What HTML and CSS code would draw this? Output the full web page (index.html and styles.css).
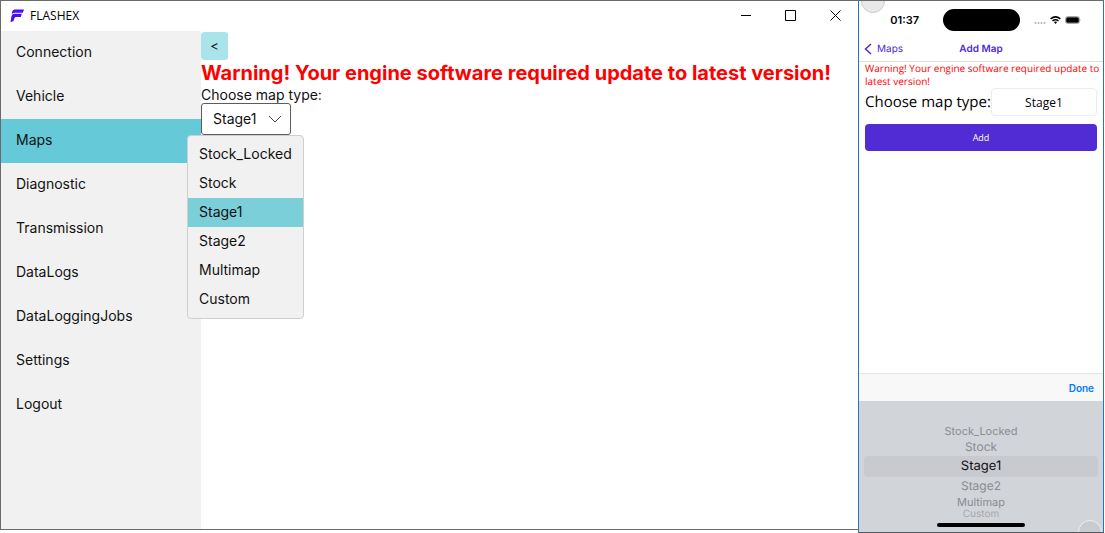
FILE: index.html
```html
<!DOCTYPE html>
<html lang="en">

<head>
	<meta charset="utf-8">
	<meta name="viewport" content="width=device-width, initial-scale=1">
	<title>FLASHEX</title>
	<link rel="stylesheet" href="styles.css">
</head>

<body>
	<!-- Desktop app -->
	<div class="window">
		<header class="titlebar">
			<svg class="logo" width="14" height="14" viewBox="0 0 14 14">
				<path d="M4.500 .5H14L12.800 3.800H5Q3.500 3.800 1.800 5Q2 .8 4.500 .5Z" fill="#4b0df5" />
				<path d="M4 4.800H11.800L10.800 8H6Q5 8.200 4.500 9L3.500 12L.5 13.300L1.500 7Q2 5 4 4.800Z" fill="#4b0df5" />
			</svg>
			<span class="app-name">FLASHEX</span>
			<button class="caption" aria-label="Minimize">
				<svg width="10" height="10" viewBox="0 0 10 10"><path d="M0 5.500H10" /></svg>
			</button>
			<button class="caption" aria-label="Maximize">
				<svg width="11" height="11" viewBox="0 0 11 11"><path d="M.5 .5H10.500V10.500H.5Z" /></svg>
			</button>
			<button class="caption" aria-label="Close">
				<svg width="11" height="11" viewBox="0 0 11 11"><path d="M.5 .5L10.500 10.500M10.500 .5L.5 10.500" /></svg>
			</button>
		</header>

		<div class="window-body">
			<nav class="sidebar">
				<a href="#">Connection</a>
				<a href="#">Vehicle</a>
				<a href="#" class="active">Maps</a>
				<a href="#">Diagnostic</a>
				<a href="#">Transmission</a>
				<a href="#">DataLogs</a>
				<a href="#">DataLoggingJobs</a>
				<a href="#">Settings</a>
				<a href="#">Logout</a>
			</nav>

			<main class="content">
				<button class="back" aria-label="Back">&lt;</button>
				<h1>Warning! Your engine software required update to latest version!</h1>
				<label for="map-type">Choose map type:</label>
				<div class="combo">
					<select id="map-type">
						<option>Stage1</option>
					</select>
					<svg class="chevron" width="14" height="8" viewBox="0 0 14 8"><path d="M1 1L7 7L13 1" /></svg>
					<ul class="menu" role="listbox" aria-label="Map type">
						<li role="option">Stock_Locked</li>
						<li role="option">Stock</li>
						<li role="option" class="selected" aria-selected="true">Stage1</li>
						<li role="option">Stage2</li>
						<li role="option">Multimap</li>
						<li role="option">Custom</li>
					</ul>
				</div>
			</main>
		</div>
	</div>

	<!-- Phone app -->
	<div class="phone">
		<div class="touch touch-top"></div>
		<div class="status">
			<span class="clock">01:37</span>
			<span class="island"></span>
			<span class="indicators">
				<svg width="12" height="10" viewBox="0 0 12 10" fill="#b5b5b5">
					<circle cx="1.500" cy="8" r="1" /><circle cx="4.500" cy="8" r="1" /><circle cx="7.500" cy="8" r="1" /><circle cx="10.500" cy="8" r="1" />
				</svg>
				<svg width="11" height="8" viewBox="0 0 11 8" fill="none" stroke="#000" stroke-width="1.500">
					<path d="M.6 2.900Q5.500 -1.200 10.400 2.900" /><path d="M2.500 5Q5.500 2.500 8.500 5" />
					<path d="M3.900 6L5.500 7.900L7.100 6Q5.500 4.800 3.900 6Z" fill="#000" stroke="none" />
				</svg>
				<svg width="17" height="8" viewBox="0 0 17 8">
					<rect x=".5" y=".5" width="14" height="7" rx="2" fill="none" stroke="#aaa" />
					<rect x="1.200" y="1.200" width="12.600" height="5.600" rx="1.500" />
					<path d="M15.500 2.800Q16.700 4 15.500 5.200Z" fill="#aaa" />
				</svg>
			</span>
		</div>
		<div class="navbar">
			<a href="#">
				<svg width="8" height="12" viewBox="0 0 8 12"><path d="M7 1L1.500 6L7 11" /></svg>
				Maps
			</a>
			<h2>Add Map</h2>
		</div>

		<div class="form">
			<p class="warning">Warning! Your engine software required update to latest version!</p>
			<div class="field">
				<label for="phone-map-type">Choose map type:</label>
				<input id="phone-map-type" type="text" value="Stage1" readonly>
			</div>
			<button class="add">Add</button>
		</div>

		<div class="toolbar">
			<button class="done">Done</button>
		</div>
		<div class="picker">
			<ul class="wheel" role="listbox" aria-label="Map type">
				<li role="option" class="far">Stock_Locked</li>
				<li role="option" class="near">Stock</li>
				<li role="option" class="current" aria-selected="true">Stage1</li>
				<li role="option" class="near">Stage2</li>
				<li role="option" class="far">Multimap</li>
				<li role="option" class="edge">Custom</li>
			</ul>
			<div class="home"></div>
			<div class="touch touch-bottom"></div>
		</div>
	</div>
</body>

</html>
```

FILE: styles.css
```css
* {
	box-sizing: border-box;
}

body {
	display: flex;
	min-height: 100vh;
	margin: 0;
	padding-right: 1px;
	background: #fff;
	color: #111;
	font-family: Inter, sans-serif;
	font-size: 14px;
}

button,
input,
select {
	margin: 0;
	padding: 0;
	border: 0;
	background: none;
	color: inherit;
	font: inherit;
}

ul {
	margin: 0;
	padding: 0;
	list-style: none;
}

a {
	color: inherit;
	text-decoration: none;
}

svg {
	display: block;
}

/* Desktop window */
.window {
	display: flex;
	flex: 1;
	flex-direction: column;
	margin-bottom: 3px;
	border: 1px solid #6b696b;
	border-right: 0;
}

.titlebar {
	display: flex;
	align-items: center;
	height: 30px;
	padding-left: 9px;
	color: #000;
}

.app-name {
	flex: 1;
	margin-left: 6px;
	font-family: "Open Sans", sans-serif;
	font-size: 12px;
	line-height: 30px;
}

.caption {
	display: grid;
	place-items: center;
	width: 45px;
	height: 28px;
	margin-bottom: 2px;
}

.caption path {
	fill: none;
	stroke: #000;
}

.window-body {
	display: flex;
	flex: 1;
}

.sidebar {
	width: 200px;
	background: #f1f1f1;
}

.sidebar a {
	display: block;
	height: 44px;
	padding-left: 15px;
	line-height: 42px;
}

.sidebar .active {
	background: #65c9d8;
}

.content {
	flex: 1;
}

.back {
	display: block;
	width: 28px;
	height: 30px;
	border: 1px solid #fff;
	border-left: 0;
	border-radius: 4px;
	background: #a9e4eb;
	font-size: 13px;
}

h1 {
	margin: 0;
	color: #f00;
	font-size: 20px;
	font-weight: 700;
	line-height: 25px;
}

.content label {
	display: block;
	line-height: 17px;
}

.combo {
	position: relative;
	width: 90px;
}

.combo select {
	display: block;
	width: 100%;
	height: 32px;
	padding: 0 0 1px 11px;
	border: 1px solid #5c5c5c;
	border-radius: 3px;
	appearance: none;
}

.chevron {
	position: absolute;
	top: 12px;
	right: 9px;
	pointer-events: none;
}

.chevron path {
	fill: none;
	stroke: #444;
}

.menu {
	position: absolute;
	top: 32px;
	left: -14px;
	width: 117px;
	padding: 4px 0;
	border: 1px solid #cfcfcf;
	border-radius: 4px;
	background: #f1f1f1;
}

.menu li {
	height: 29px;
	padding-left: 11px;
	line-height: 27px;
}

.menu .selected {
	background: #7bcfd9;
}

/* Phone */
.phone {
	position: relative;
	display: flex;
	flex-direction: column;
	width: 246px;
	border: 1px solid #2576b9;
	border-top-color: #6b696b;
	border-bottom-color: #555a60;
	overflow: hidden;
	text-rendering: geometricPrecision;
}

.status {
	display: grid;
	grid-template-columns: 1fr 77px 1fr;
	align-items: center;
	height: 38px;
}

.clock {
	padding-left: 8px;
	color: #000;
	font-size: 11px;
	font-weight: 600;
	text-align: center;
}

.island {
	height: 22px;
	border-radius: 11px;
	background: #000;
}

.indicators {
	display: flex;
	align-items: center;
	justify-content: center;
	gap: 4px;
	padding-right: 6px;
}

.navbar {
	display: grid;
	grid-template-columns: 1fr auto 1fr;
	align-items: center;
	height: 23px;
	padding: 0 5px 3px;
	border-bottom: 1px solid #dedede;
	color: #512bd4;
	font-size: 10px;
}

.navbar a {
	display: flex;
	align-items: center;
	gap: 5px;
}

.navbar path {
	fill: none;
	stroke: #512bd4;
	stroke-width: 1.5;
}

h2 {
	margin: 0;
	font-size: 10px;
	font-weight: 600;
}

.form {
	flex: 1;
	padding: 0 6px;
	font-family: "Open Sans", sans-serif;
}

.warning {
	margin: 0 -4px 0 0;
	color: #f00;
	font-size: 10px;
	line-height: 13px;
}

.field {
	display: flex;
	align-items: center;
	color: #000;
	font-size: 15px;
}

.field input {
	flex: 1;
	min-width: 0;
	height: 28px;
	border: 1px solid #ececec;
	border-radius: 4px;
	font-size: 12px;
	text-align: center;
}

.add {
	display: block;
	width: 100%;
	height: 27px;
	margin-top: 8px;
	border-radius: 4px;
	background: #512bd4;
	color: #fff;
	font-size: 9px;
}

.toolbar {
	display: flex;
	justify-content: flex-end;
	height: 28px;
	padding-right: 9px;
	border-top: 1px solid #e5e5e5;
	background: #f8f8f8;
}

.done {
	color: #007aff;
	font-size: 10px;
	font-weight: 600;
}

.picker {
	position: relative;
	height: 131px;
	padding: 23px 5px 0;
	background: #d1d4d9;
}

.wheel {
	color: #8a8c91;
	text-align: center;
}

.wheel .far {
	font-size: 11px;
	line-height: 14px;
}

.wheel .near {
	font-size: 12px;
	line-height: 18px;
}

.wheel .current {
	border-radius: 4px;
	background: #c9cacf;
	color: #111;
	font-size: 13px;
	line-height: 21px;
}

.wheel .edge {
	color: #a5a7ac;
	font-size: 10px;
	line-height: 10px;
}

.home {
	width: 88px;
	height: 4px;
	margin: 4px auto 0;
	border-radius: 2px;
	background: #000;
}

/* Touch pointers lying over the screen corners */
.touch {
	position: absolute;
	width: 24px;
	height: 24px;
	border-radius: 12px;
}

.touch-top {
	top: -12px;
	left: 2px;
	border: 1px solid #ccc;
	background: #e9e9e9;
}

.touch-bottom {
	right: 1px;
	bottom: -12px;
	border: 1px solid #f0f0f0;
	background: #c9cbcf;
}
```
